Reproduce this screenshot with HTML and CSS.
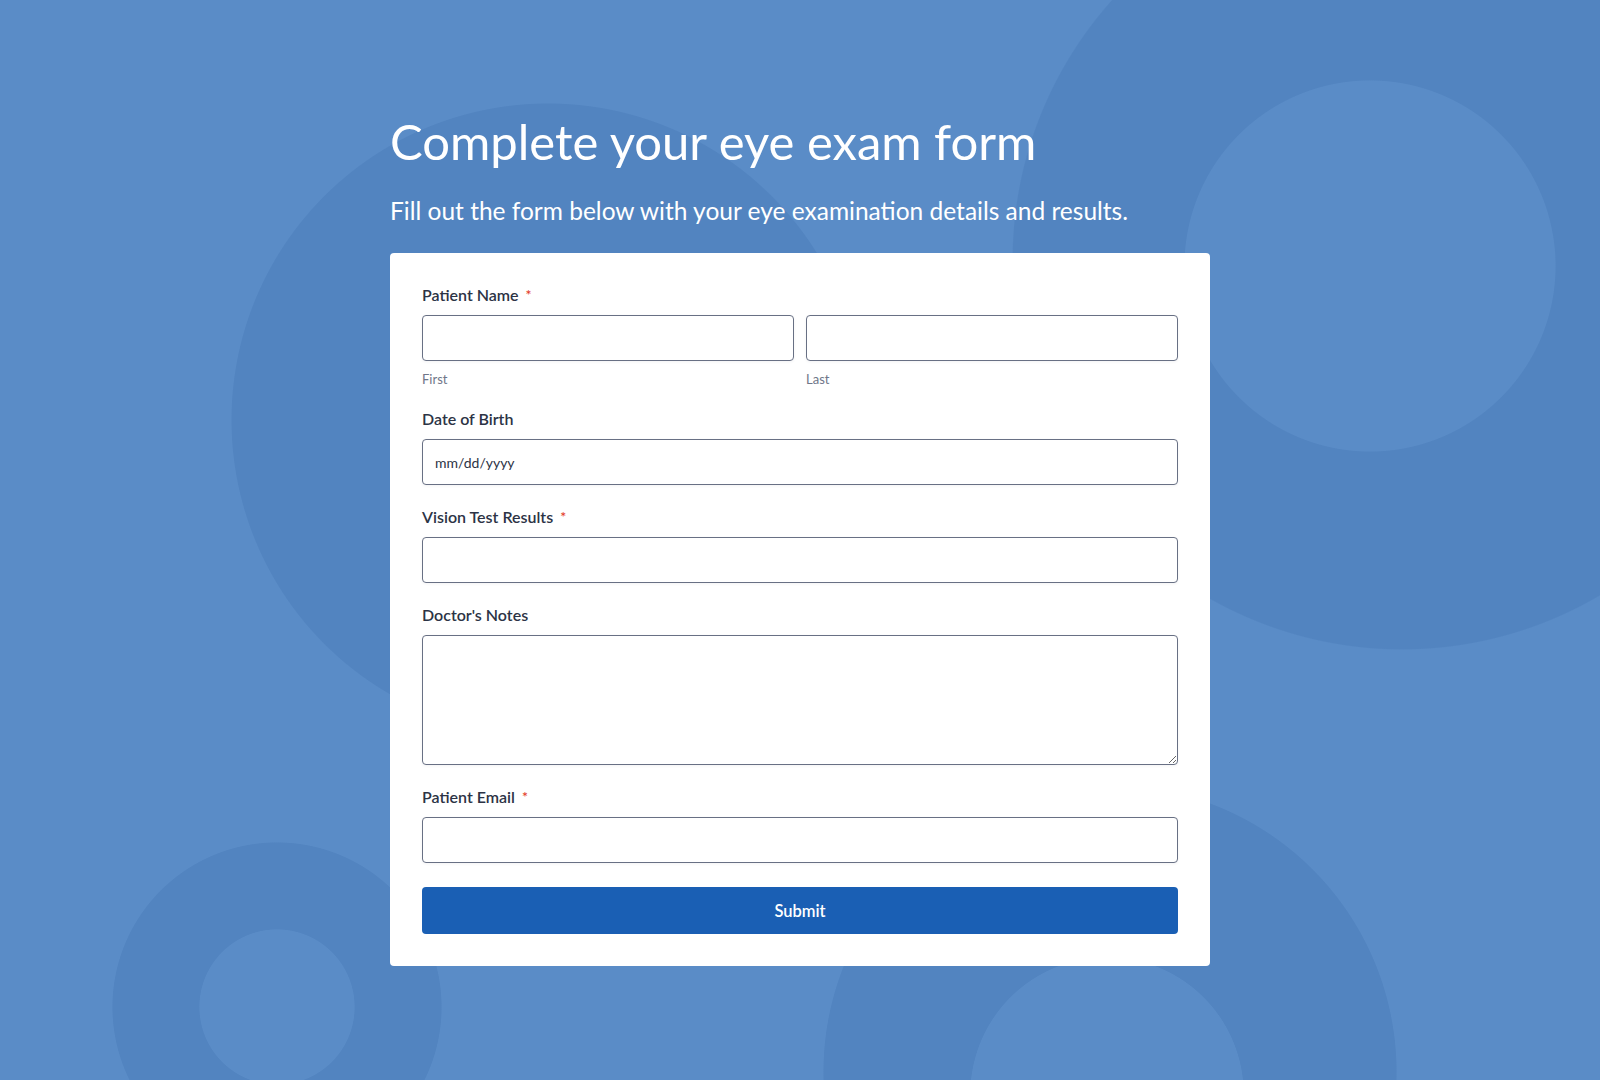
FILE: index.html
```html
<!DOCTYPE html>
<html lang="en">
<head>
<meta charset="utf-8">
<title>Complete your eye exam form</title>
<link rel="stylesheet" href="styles.css">
</head>
<body>
<main class="page">
  <header class="intro">
    <h1 class="title">Complete your eye exam form</h1>
    <p class="subtitle">Fill out the form below with your eye examination details and results.</p>
  </header>
  <form class="card">
    <div class="field">
      <label class="label">Patient Name <span class="req">*</span></label>
      <div class="name-row">
        <div class="name-col">
          <input class="input" type="text">
          <span class="sublabel">First</span>
        </div>
        <div class="name-col">
          <input class="input" type="text">
          <span class="sublabel">Last</span>
        </div>
      </div>
    </div>
    <div class="field">
      <label class="label">Date of Birth</label>
      <input class="input date" type="text" placeholder="mm/dd/yyyy">
    </div>
    <div class="field">
      <label class="label">Vision Test Results <span class="req">*</span></label>
      <input class="input" type="text">
    </div>
    <div class="field">
      <label class="label">Doctor's Notes</label>
      <textarea class="input textarea"></textarea>
    </div>
    <div class="field">
      <label class="label">Patient Email <span class="req">*</span></label>
      <input class="input" type="email">
    </div>
    <button class="submit" type="button">Submit</button>
  </form>
</main>
</body>
</html>
```
FILE: styles.css
```css
html, body {
  margin: 0;
  padding: 0;
}
body {
  min-height: 1080px;
  font-family: Lato, "Noto Sans", sans-serif;
  color: #2c3345;
  background-color: #5a8cc7;
  background-image:
    radial-gradient(circle 78px at 277px 1007px, #5a8cc7 99%, transparent 100%),
    radial-gradient(circle 165px at 277px 1007px, #5284c0 99.5%, transparent 100%),
    radial-gradient(circle 317px at 548px 420px, #5284c0 99.7%, transparent 100%),
    radial-gradient(circle 186px at 1370px 266px, #5a8cc7 99.5%, transparent 100%),
    radial-gradient(circle 390px at 1402px 260px, #5284c0 99.7%, transparent 100%),
    radial-gradient(circle 137px at 1107px 1094px, #5a8cc7 99.5%, transparent 100%),
    radial-gradient(circle 287px at 1110px 1072px, #5284c0 99.7%, transparent 100%);
  background-repeat: no-repeat;
}
.page {
  width: 820px;
  margin: 0 auto;
  padding-top: 111px;
  padding-bottom: 40px;
}
.intro {
  color: #ffffff;
}
.title {
  margin: 0;
  font-size: 49px;
  line-height: 60px;
  font-weight: 400;
}
.subtitle {
  margin: 25px 0 27px;
  font-size: 24.5px;
  line-height: 30px;
  font-weight: 400;
}
.card {
  display: flex;
  flex-direction: column;
  background: #ffffff;
  border-radius: 4px;
  padding: 32px 32px 32px;
}
.field {
  display: flex;
  flex-direction: column;
  margin-bottom: 22px;
}
.label {
  font-size: 16px;
  line-height: 20px;
  font-weight: 600;
  color: #2c3345;
  margin-bottom: 10px;
}
.req {
  color: #e3402b;
  font-size: 14px;
  margin-left: 3px;
  vertical-align: 1px;
}
.name-row {
  display: flex;
  gap: 12px;
}
.name-col {
  flex: 1;
  display: flex;
  flex-direction: column;
}
.sublabel {
  margin-top: 10px;
  font-size: 13px;
  line-height: 16px;
  color: #6f7689;
}
.input {
  box-sizing: border-box;
  width: 100%;
  height: 46px;
  margin: 0;
  border: 1px solid #687084;
  border-radius: 4px;
  background: #ffffff;
  box-shadow: 0 1px 3px rgba(44, 51, 69, 0.06);
  font-family: Lato, "Noto Sans", sans-serif;
  font-size: 14px;
  padding: 0 12px;
  color: #2c3345;
  outline: none;
}
.date::placeholder {
  color: #2c3345;
  opacity: 1;
}
.textarea {
  height: 130px;
  padding: 10px 12px;
  resize: vertical;
  display: block;
}
.submit {
  margin-top: 2px;
  height: 47px;
  border: 0;
  border-radius: 4px;
  background: #1a5fb4;
  color: #ffffff;
  font-family: Lato, "Noto Sans", sans-serif;
  font-size: 16.5px;
  font-weight: 600;
  cursor: pointer;
}
```
